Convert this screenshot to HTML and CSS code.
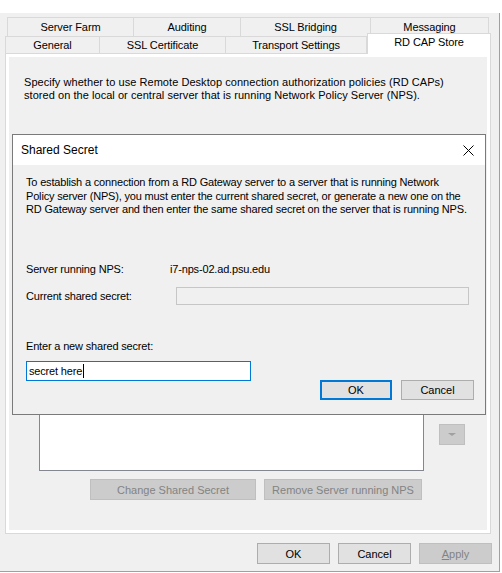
FILE: index.html
```html
<!DOCTYPE html>
<html>
<head>
<meta charset="utf-8">
<link rel="stylesheet" href="styles.css">
</head>
<body>
<div class="topstrip"></div>
<div class="window">
  <div class="sheet">
    <div class="tabrow back">
      <div class="tab w126">Server Farm</div>
      <div class="tab w107">Auditing</div>
      <div class="tab w130">SSL Bridging</div>
      <div class="tab w119">Messaging</div>
    </div>
    <div class="tabrow front">
      <div class="tab w94">General</div>
      <div class="tab w126">SSL Certificate</div>
      <div class="tab w141">Transport Settings</div>
      <div class="tab selected">RD CAP Store</div>
    </div>
    <div class="panel">
      <div class="page">
        <p class="intro">Specify whether to use Remote Desktop connection authorization policies (RD CAPs)<br>stored on the local or central server that is running Network Policy Server (NPS).</p>
        <div class="listrow">
          <div class="listbox"></div>
          <div class="ddbtn"><span class="tri"></span></div>
        </div>
        <div class="pagebtns">
          <div class="btn disabled wide1">Change Shared Secret</div>
          <div class="btn disabled wide2">Remove Server running NPS</div>
        </div>
      </div>
    </div>
  </div>
  <div class="footer">
    <div class="btn">OK</div>
    <div class="btn">Cancel</div>
    <div class="btn disabled"><u>A</u>pply</div>
  </div>
</div>

<div class="dialog">
  <div class="titlebar">
    <span class="title">Shared Secret</span>
    <svg class="close" width="11" height="11" viewBox="0 0 11 11"><path d="M0.5 0.5 L10.5 10.5 M10.5 0.5 L0.5 10.5" stroke="#000" stroke-width="1" fill="none"/></svg>
  </div>
  <div class="dbody">
    <p class="dtext">To establish a connection from a RD Gateway server to a server that is running Network<br>Policy server (NPS), you must enter the current shared secret, or generate a new one on the<br>RD Gateway server and then enter the same shared secret on the server that is running NPS.</p>
    <div class="row nps">
      <span class="lbl">Server running NPS:</span>
      <span class="val">i7-nps-02.ad.psu.edu</span>
    </div>
    <div class="row cur">
      <span class="lbl">Current shared secret:</span>
      <div class="tbox-disabled"></div>
    </div>
    <div class="newlbl">Enter a new shared secret:</div>
    <div class="row inrow">
      <div class="tbox-active"><span class="typed">secret here</span></div>
      <div class="dbtns">
        <div class="btn default">OK</div>
        <div class="btn">Cancel</div>
      </div>
    </div>
  </div>
</div>
</body>
</html>
```

FILE: styles.css
```css
* { box-sizing: border-box; }
html, body {
  margin: 0;
  padding: 0;
  background: #ffffff;
  font-family: "Liberation Sans", Arial, sans-serif;
  font-size: 11px;
  color: #000;
}
.topstrip {
  height: 13px;
  background: #ffffff;
}
.window {
  width: 500px;
  height: 559px;
  background: #f0f0f0;
  border-right: 1px solid #a0a0a0;
  border-bottom: 1px solid #a0a0a0;
  padding: 4px 0 0 5px;
  display: flex;
  flex-direction: column;
}
.sheet {
  width: 486px;
  display: flex;
  flex-direction: column;
  flex-shrink: 0;
}
.tabrow {
  display: flex;
}
.tabrow.back {
  margin-left: 2px;
  height: 19px;
}
.tabrow.front {
  height: 17px;
}
.tab {
  border: 1px solid #d9d9d9;
  border-bottom: none;
  margin-right: -1px;
  text-align: center;
  line-height: 18px;
  background: #f0f0f0;
  white-space: nowrap;
  letter-spacing: -0.1px;
}
.tabrow.front .tab { line-height: 16px; }
.w126 { width: 127px; }
.w107 { width: 108px; }
.w130 { width: 131px; }
.w119 { width: 119px; }
.w94 { width: 95px; }
.w141 { width: 142px; }
.tab.selected {
  position: relative;
  z-index: 2;
  width: 124px;
  height: 21px;
  margin-top: -3px;
  margin-left: 1px;
  background: #ffffff;
  line-height: 18px;
}
.panel {
  border: 1px solid #d9d9d9;
  background: #ffffff;
  padding: 3px;
  height: 481px;
}
.page {
  background: #f0f0f0;
  height: 100%;
  display: flex;
  flex-direction: column;
  padding: 0 0 30px 0;
}
.intro {
  margin: 19px 0 0 15px;
  line-height: 13px;
  white-space: nowrap;
  letter-spacing: 0.05px;
}
.listrow {
  margin-top: auto;
  display: flex;
  align-items: flex-end;
  padding-left: 30px;
}
.listbox {
  width: 385px;
  height: 180px;
  background: #ffffff;
  border: 1px solid #828790;
}
.ddbtn {
  width: 26px;
  height: 21px;
  margin: 0 0 26px 15px;
  background: #cccccc;
  border: 1px solid #bfbfbf;
  display: flex;
  align-items: center;
  justify-content: center;
}
.tri {
  width: 0;
  height: 0;
  border-left: 4px solid transparent;
  border-right: 4px solid transparent;
  border-top: 3px solid #a0a0a0;
}
.pagebtns {
  display: flex;
  gap: 8px;
  margin: 8px 0 0 81px;
}
.btn {
  height: 21px;
  width: 73px;
  background: #e1e1e1;
  border: 1px solid #adadad;
  display: flex;
  align-items: center;
  justify-content: center;
  white-space: nowrap;
  flex-shrink: 0;
}
.btn.disabled {
  background: #cccccc;
  border-color: #bfbfbf;
  color: #838383;
}
.btn.wide1 { width: 166px; }
.btn.wide2 { width: 158px; }
.footer {
  display: flex;
  justify-content: flex-end;
  gap: 8px;
  padding: 9px 7px 0 0;
}
.footer .btn { width: 73px; }

.dialog {
  position: absolute;
  left: 12px;
  top: 134px;
  width: 474px;
  height: 281px;
  border: 1px solid #7a7a7a;
  background: #f0f0f0;
  display: flex;
  flex-direction: column;
  z-index: 10;
}
.titlebar {
  height: 30px;
  flex-shrink: 0;
  background: #ffffff;
  display: flex;
  align-items: center;
  justify-content: space-between;
  padding: 0 11px 0 8px;
}
.title { font-size: 12px; }
.dbody {
  padding: 11px 10px 0 13px;
  display: flex;
  flex-direction: column;
  letter-spacing: -0.17px;
}
.dtext {
  margin: 0;
  line-height: 13.5px;
  white-space: nowrap;
}
.row {
  display: flex;
  align-items: center;
}
.nps {
  margin-top: 43px;
  height: 18px;
}
.lbl { width: 144px; }
.cur {
  margin-top: 9px;
  height: 18px;
}
.cur .lbl { width: 150px; }
.tbox-disabled {
  width: 293px;
  height: 18px;
  border: 1px solid #c6c6c6;
  background: #f0f0f0;
}
.newlbl {
  margin-top: 35px;
  line-height: 13.5px;
}
.inrow {
  margin-top: 8px;
  align-items: flex-start;
}
.tbox-active {
  width: 225px;
  height: 20px;
  border: 1px solid #0078d7;
  background: #ffffff;
  padding-left: 2px;
  display: flex;
  align-items: center;
  flex-shrink: 0;
}
.typed {
  border-right: 1px solid #000;
  line-height: 14px;
  padding-right: 1px;
}
.dbtns {
  display: flex;
  gap: 9px;
  margin: 19px 0 0 69px;
}
.dbtns .btn { width: 73px; height: 20px; letter-spacing: 0; }
.btn.default {
  width: 72px;
  border: 2px solid #0078d7;
}
```
